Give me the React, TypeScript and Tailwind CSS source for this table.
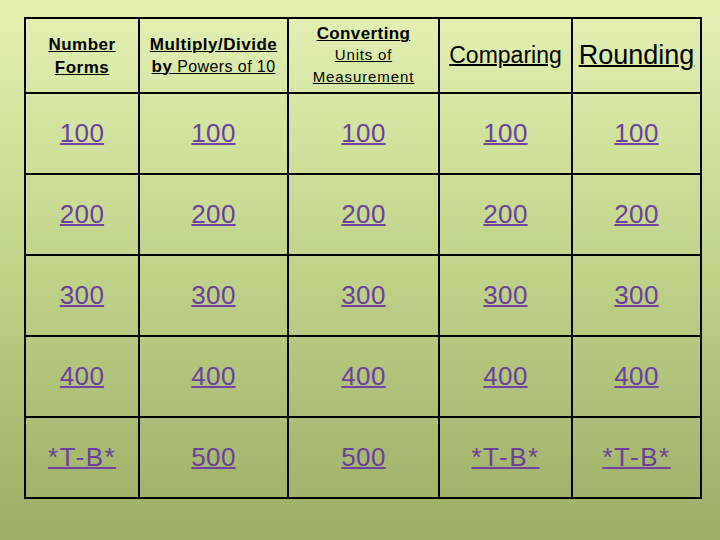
import React from 'react'

const columns = [
  { id: 'forms', width: 'w-[114px]' },
  { id: 'powers', width: 'w-[149px]' },
  { id: 'convert', width: 'w-[151px]' },
  { id: 'compare', width: 'w-[133px]' },
  { id: 'round', width: 'w-[129px]' },
]

// board values, row by row
const rows = [
  ['100', '100', '100', '100', '100'],
  ['200', '200', '200', '200', '200'],
  ['300', '300', '300', '300', '300'],
  ['400', '400', '400', '400', '400'],
  ['*T-B*', '500', '500', '*T-B*', '*T-B*'],
]

const App: React.FC = () => {
  return (
    <div
      className="w-[720px] h-[540px] pl-[24px] pt-[17px] bg-gradient-to-b from-[#e4f2b4] via-[#c0d389] to-[#9cad66]"
      style={{ fontFamily: '"Liberation Sans", Arial, sans-serif' }}>
      <table className="table-fixed border-collapse w-[676px]">
        <colgroup>
          { columns.map((col) => (
            <col key={ col.id } className={ col.width } />
          ))}
        </colgroup>
        <thead>
          <tr className="h-[75px]">
            <th className="border-2 border-black text-center align-middle font-bold text-black text-[17px] leading-[23px] tracking-[0.5px]">
              <span className="underline decoration-1">Number</span>
              <br />
              <span className="underline decoration-1">Forms</span>
            </th>
            <th className="border-2 border-black text-center align-middle text-black leading-[22px]">
              <span className="underline decoration-1 font-bold text-[17px] tracking-[0.5px]">Multiply/Divide</span>
              <br />
              <span className="underline decoration-1 text-[17px]">
                <span className="font-bold tracking-[0.5px]">by</span>
                <span className="font-normal text-[16px] tracking-[0.4px]"> Powers of 10</span>
              </span>
            </th>
            <th className="border-2 border-black text-center align-middle text-black">
              <div className="font-bold text-[17px] leading-[21px] tracking-[0.4px] underline decoration-1">Converting</div>
              <div className="font-normal text-[15px] leading-[21px] tracking-[0.8px] underline decoration-1">Units of</div>
              <div className="font-normal text-[15px] leading-[23px] tracking-[0.9px] underline decoration-1">Measurement</div>
            </th>
            <th className="border-2 border-black text-center align-middle font-normal text-black text-[23px] underline decoration-2 whitespace-nowrap">
              Comparing
            </th>
            <th className="border-2 border-black text-center align-middle font-normal text-black text-[27px] underline decoration-2 whitespace-nowrap">
              Rounding
            </th>
          </tr>
        </thead>
        <tbody>
          { rows.map((row, r) => (
            <tr key={ r } className="h-[81px]">
              { row.map((value, c) => (
                <td key={ c } className="border-2 border-black text-center align-middle">
                  <a
                    href="#"
                    className={ value === '*T-B*'
                      ? 'text-[26px] tracking-[1.5px] text-[#6b3f9c] underline decoration-2 decoration-[#7042a3]'
                      : 'text-[26px] tracking-[0.3px] text-[#6b3f9c] underline decoration-2 decoration-[#7042a3]' }>
                    { value }
                  </a>
                </td>
              ))}
            </tr>
          ))}
        </tbody>
      </table>
    </div>
  )
}

export default App
